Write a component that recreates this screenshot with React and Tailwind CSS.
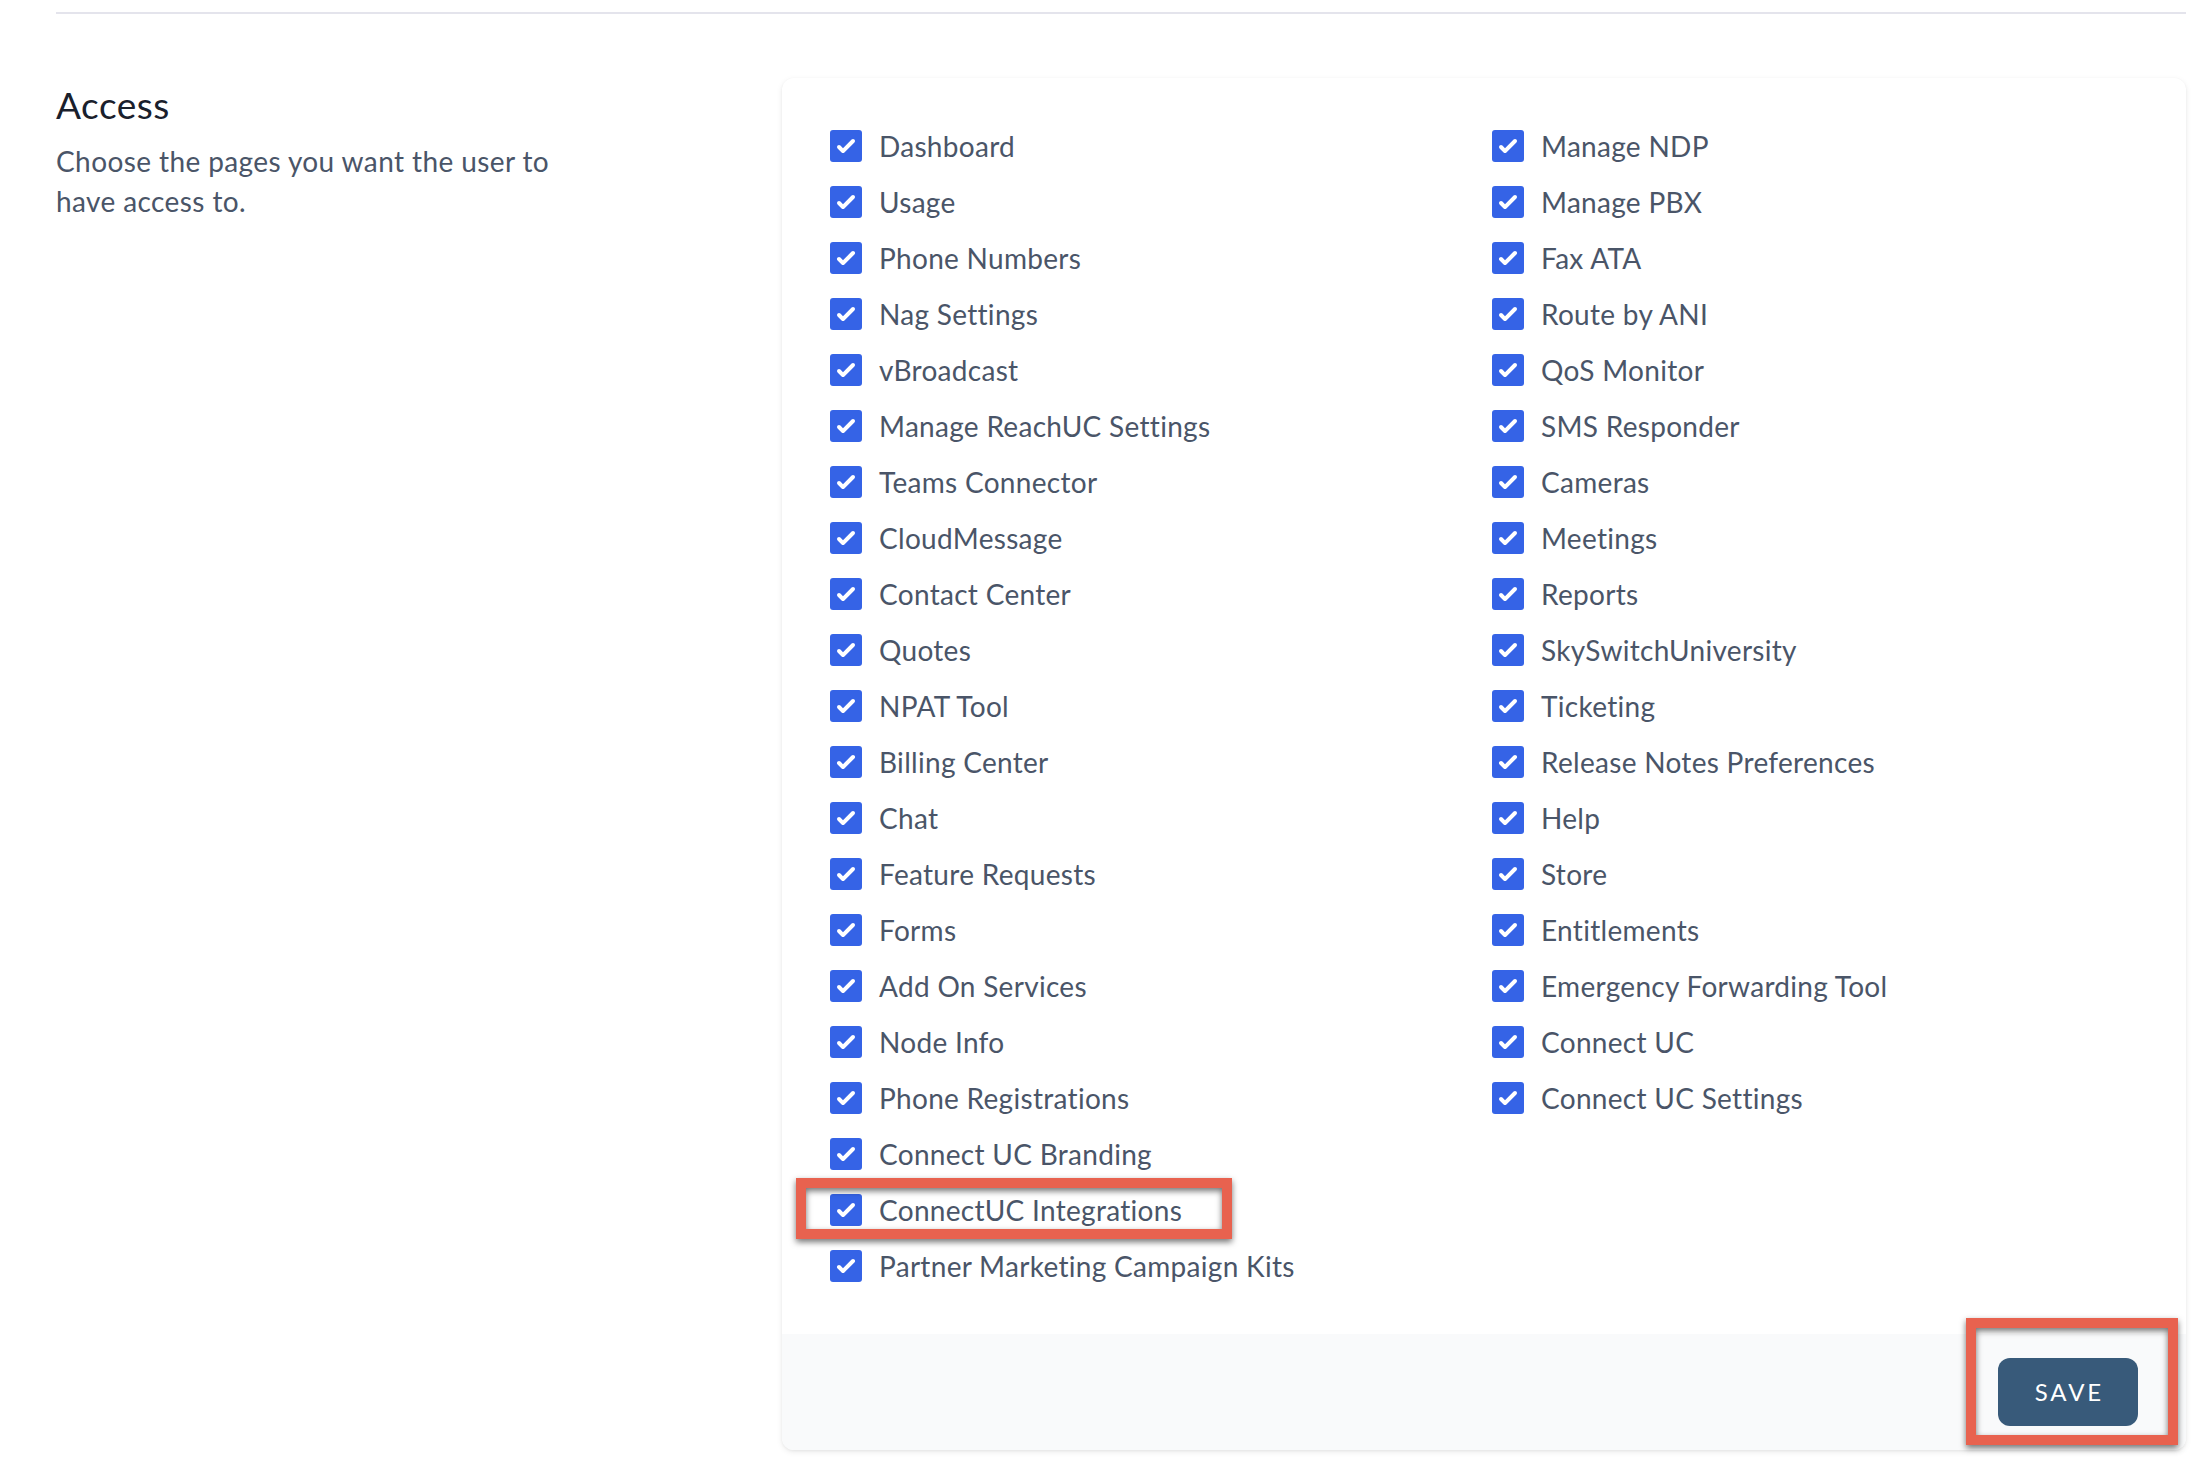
import React from "react";

const leftPages = [
  "Dashboard",
  "Usage",
  "Phone Numbers",
  "Nag Settings",
  "vBroadcast",
  "Manage ReachUC Settings",
  "Teams Connector",
  "CloudMessage",
  "Contact Center",
  "Quotes",
  "NPAT Tool",
  "Billing Center",
  "Chat",
  "Feature Requests",
  "Forms",
  "Add On Services",
  "Node Info",
  "Phone Registrations",
  "Connect UC Branding",
  "ConnectUC Integrations",
  "Partner Marketing Campaign Kits",
];

const rightPages = [
  "Manage NDP",
  "Manage PBX",
  "Fax ATA",
  "Route by ANI",
  "QoS Monitor",
  "SMS Responder",
  "Cameras",
  "Meetings",
  "Reports",
  "SkySwitchUniversity",
  "Ticketing",
  "Release Notes Preferences",
  "Help",
  "Store",
  "Entitlements",
  "Emergency Forwarding Tool",
  "Connect UC",
  "Connect UC Settings",
];

// red callout frame drawn over the screenshot
const Callout = ({ className }) => (
  <div
    className={
      "pointer-events-none absolute border-[10px] border-[#e8624f] drop-shadow-[0_3px_3px_rgba(0,0,0,0.55)] " +
      className
    }
  />
);

const CheckRow = ({ label }) => (
  <label className="relative flex h-10 items-center gap-[17px]">
    <span className="flex h-8 w-8 shrink-0 items-center justify-center rounded-[3px] bg-[#3563e6]">
      <svg viewBox="0 0 16 16" className="h-8 w-8" fill="white">
        <path d="M12.207 4.793a1 1 0 010 1.414l-5 5a1 1 0 01-1.414 0l-2-2a1 1 0 011.414-1.414L6.5 9.086l4.293-4.293a1 1 0 011.414 0z" />
      </svg>
    </span>
    <span className="text-[28px] leading-10 tracking-[0.3px] text-[#4a5568]">{label}</span>
    {label === "ConnectUC Integrations" && (
      <Callout className="left-[-34px] top-[-12px] h-[61px] w-[436px]" />
    )}
  </label>
);

const App = () => {
  return (
    <div className="min-h-screen bg-white pl-[56px] pr-[22px] pt-3 font-['Lato','Noto_Sans',sans-serif]">
      <div className="h-[2px] bg-[#e4e4ec]" />

      <div className="mt-16 grid grid-cols-3 gap-12">
        <div className="col-span-1 pt-[3px]">
          <h2 className="text-[37px] leading-[48px] tracking-[0.5px] text-[#1a202c]">Access</h2>
          <p className="mt-[12px] max-w-[500px] text-[28px] leading-10 tracking-[0.4px] text-[#4a5568]">
            Choose the pages you want the user to have access to.
          </p>
        </div>

        <div className="col-span-2 rounded-xl bg-white shadow-[0_2px_6px_rgba(0,0,0,0.08),0_1px_3px_rgba(0,0,0,0.05)]">
          <div className="grid grid-cols-2 gap-x-4 p-12">
            <div className="flex flex-col gap-4">
              {leftPages.map((p) => (
                <CheckRow key={p} label={p} />
              ))}
            </div>
            <div className="flex flex-col gap-4">
              {rightPages.map((p) => (
                <CheckRow key={p} label={p} />
              ))}
            </div>
          </div>

          <div className="flex justify-end rounded-b-xl bg-[#f9fafb] px-12 py-6">
            <div className="relative">
              <button className="flex h-[68px] w-[140px] items-center justify-center rounded-xl bg-[#385a7a] pl-[0.12em] text-[24px] tracking-[0.12em] text-white">
                SAVE
              </button>
              <Callout className="left-[-32px] top-[-40px] h-[127px] w-[212px]" />
            </div>
          </div>
        </div>
      </div>
    </div>
  );
};

export default App;
